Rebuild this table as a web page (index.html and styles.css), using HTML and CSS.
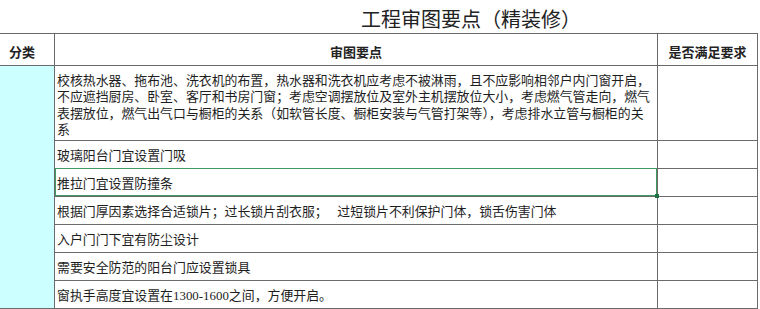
FILE: index.html
```html
<!DOCTYPE html>
<html lang="zh-CN">
<head>
<meta charset="utf-8">
<title>工程审图要点（精装修）</title>
<link rel="stylesheet" href="styles.css">
</head>
<body>
<div class="sheet">
  <div class="title">工程审图要点（精装修）</div>
  <div class="grid">
    <div class="c h h-cat">分类</div>
    <div class="c h">审图要点</div>
    <div class="c h">是否满足要求</div>

    <div class="cat"></div>

    <div class="c t multi">
      <span class="ln">校核热水器、拖布池、洗衣机的布置，热水器和洗衣机应考虑不被淋雨，且不应影响相邻户内门窗开启，</span>
      <span class="ln">不应遮挡厨房、卧室、客厅和书房门窗；考虑空调摆放位及室外主机摆放位大小，考虑燃气管走向，燃气</span>
      <span class="ln">表摆放位，燃气出气口与橱柜的关系（如软管长度、橱柜安装与气管打架等），考虑排水立管与橱柜的关</span>
      <span class="ln">系</span>
    </div>
    <div class="c"></div>

    <div class="c t">玻璃阳台门宜设置门吸</div>
    <div class="c"></div>

    <div class="c t sel">推拉门宜设置防撞条<span class="sel-box"></span><span class="sel-handle"></span></div>
    <div class="c"></div>

    <div class="c t">根据门厚因素选择合适锁片；过长锁片刮衣服；&nbsp;&nbsp;&nbsp;过短锁片不利保护门体，锁舌伤害门体</div>
    <div class="c"></div>

    <div class="c t">入户门门下宜有防尘设计</div>
    <div class="c"></div>

    <div class="c t">需要安全防范的阳台门应设置锁具</div>
    <div class="c"></div>

    <div class="c t">窗执手高度宜设置在1300-1600之间，方便开启。</div>
    <div class="c"></div>
  </div>
</div>
</body>
</html>
```

FILE: styles.css
```css
* {
  box-sizing: border-box;
}

html, body {
  margin: 0;
  padding: 0;
  background: #ffffff;
}

body {
  width: 760px;
  height: 309px;
  overflow: hidden;
  font-family: "Liberation Serif", "Noto Sans CJK SC", serif;
  color: #1e1e1e;
}

.sheet {
  width: 760px;
}

.title {
  height: 33px;
  padding-left: 182px;
  padding-top: 8px;
  text-align: center;
  font-size: 20px;
  line-height: 24px;
  color: #222222;
  white-space: nowrap;
}

.grid {
  display: grid;
  width: 758px;
  grid-template-columns: 55px 603px 100px;
  grid-template-rows: 32px 75px repeat(6, 28px);
  border-top: 1px solid #6a6a6a;
}

.c {
  border-right: 1px solid #6a6a6a;
  border-bottom: 1px solid #6a6a6a;
  min-width: 0;
}

.h {
  display: flex;
  align-items: center;
  justify-content: center;
  padding-top: 3px;
  font-size: 13px;
  font-weight: bold;
  color: #222222;
}

.h-cat {
  padding-right: 10px;
}

.cat {
  grid-column: 1;
  grid-row: 2 / span 7;
  background: #ccffff;
  border-right: 1px solid #6a6a6a;
  border-bottom: 1px solid #6a6a6a;
}

.t {
  display: flex;
  align-items: center;
  padding-left: 2px;
  font-size: 12.9px;
  white-space: nowrap;
}

.multi {
  display: block;
  padding-top: 7px;
  line-height: 16.3px;
}

.ln {
  display: block;
}

.sel {
  position: relative;
}

.sel-box {
  position: absolute;
  top: -1px;
  left: 0;
  right: 0;
  bottom: 0;
  border: 1px solid #3d9a62;
  pointer-events: none;
}

.sel-handle {
  position: absolute;
  right: -2px;
  bottom: -2px;
  width: 4px;
  height: 4px;
  background: #1f7244;
}
```
